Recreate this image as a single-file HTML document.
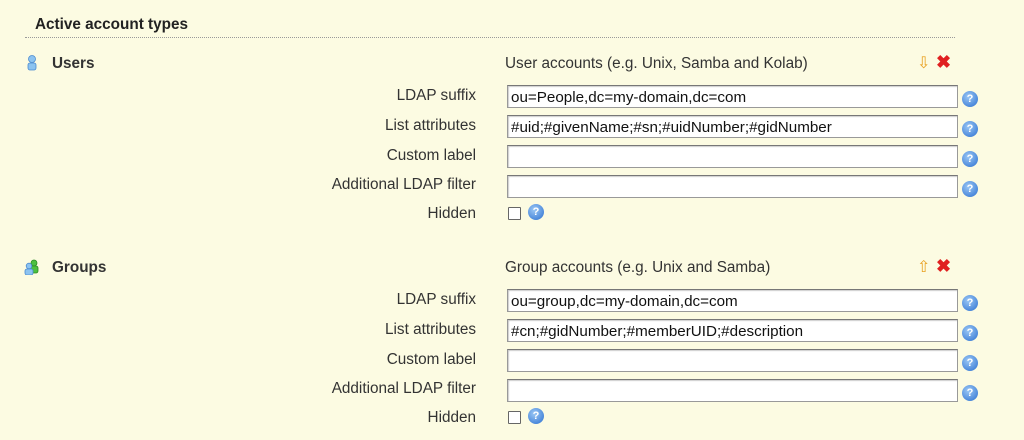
<!DOCTYPE html>
<html><head><style>
body{margin:0;width:1024px;height:440px;background:#fcfbe2;font-family:"Liberation Sans",sans-serif;font-size:15.3px;color:#333;position:relative;overflow:hidden}
.a{position:absolute;white-space:nowrap}
.h{left:35px;top:16px;font-weight:bold;font-size:15.3px;color:#222}
.line{position:absolute;left:25px;top:37px;width:930px;border-top:1px dotted #999}
.t{font-weight:bold}
.lab{right:548px;text-align:right}
.in{position:absolute;left:507px;width:446px;height:21px;background:#fff;border:1px solid #999;border-top-color:#777;box-shadow:inset 1px 1px 1px #ccc;font-size:15.2px;line-height:23px;padding-left:3px;color:#111;box-sizing:content-box}
.q{position:absolute;width:16px;height:16px;border-radius:50%;background:radial-gradient(circle at 40% 35%,#9cc8f5,#2a6fd0);color:#fff;font-size:11px;font-weight:bold;text-align:center;line-height:16px}
.cb{position:absolute;left:508px;width:11px;height:11px;border:1px solid #666;background:#fff;border-radius:1px}
.dn{left:917px;color:#e8a020;font-size:16px}
.x{left:936px;color:#e02020;font-size:18px;font-weight:bold}
</style></head><body>
<div class="a h">Active account types</div>
<div class="line"></div>

<svg class="a" style="left:25px;top:55px" width="14" height="16" viewBox="0 0 14 16"><circle cx="7" cy="4" r="3.5" fill="#8cc3f0" stroke="#4a8ad0" stroke-width=".8"/><rect x="3" y="8" width="8" height="7" rx="2" fill="#8cc3f0" stroke="#4a8ad0" stroke-width=".8"/></svg>
<div class="a t" style="left:52px;top:55px">Users</div>
<div class="a" style="left:505px;top:55px">User accounts (e.g. Unix, Samba and Kolab)</div>
<div class="a dn" style="top:53px">⇩</div>
<div class="a x" style="top:52px">✖</div>

<div class="a lab" style="top:87px">LDAP suffix</div><div class="in" style="top:85px">ou=People,dc=my-domain,dc=com</div><div class="q" style="left:962px;top:91px">?</div>
<div class="a lab" style="top:117px">List attributes</div><div class="in" style="top:115px">#uid;#givenName;#sn;#uidNumber;#gidNumber</div><div class="q" style="left:962px;top:121px">?</div>
<div class="a lab" style="top:147px">Custom label</div><div class="in" style="top:145px"></div><div class="q" style="left:962px;top:151px">?</div>
<div class="a lab" style="top:176px">Additional LDAP filter</div><div class="in" style="top:175px"></div><div class="q" style="left:962px;top:181px">?</div>
<div class="a lab" style="top:205px">Hidden</div><div class="cb" style="top:207px"></div><div class="q" style="left:528px;top:204px">?</div>

<svg class="a" style="left:24px;top:259px" width="16" height="16" viewBox="0 0 16 16"><circle cx="10" cy="4" r="3" fill="#4cc040" stroke="#2a8a20" stroke-width=".8"/><rect x="6" y="7" width="8" height="7" rx="2" fill="#4cc040" stroke="#2a8a20" stroke-width=".8"/><circle cx="5" cy="7" r="2.8" fill="#8cc3f0" stroke="#4a8ad0" stroke-width=".8"/><rect x="1" y="10" width="8" height="6" rx="2" fill="#8cc3f0" stroke="#4a8ad0" stroke-width=".8"/></svg>
<div class="a t" style="left:52px;top:259px">Groups</div>
<div class="a" style="left:505px;top:259px">Group accounts (e.g. Unix and Samba)</div>
<div class="a dn" style="top:257px">⇧</div>
<div class="a x" style="top:256px">✖</div>

<div class="a lab" style="top:291px">LDAP suffix</div><div class="in" style="top:289px">ou=group,dc=my-domain,dc=com</div><div class="q" style="left:962px;top:295px">?</div>
<div class="a lab" style="top:321px">List attributes</div><div class="in" style="top:319px">#cn;#gidNumber;#memberUID;#description</div><div class="q" style="left:962px;top:325px">?</div>
<div class="a lab" style="top:351px">Custom label</div><div class="in" style="top:349px"></div><div class="q" style="left:962px;top:355px">?</div>
<div class="a lab" style="top:380px">Additional LDAP filter</div><div class="in" style="top:379px"></div><div class="q" style="left:962px;top:385px">?</div>
<div class="a lab" style="top:409px">Hidden</div><div class="cb" style="top:411px"></div><div class="q" style="left:528px;top:408px">?</div>
</body></html>
